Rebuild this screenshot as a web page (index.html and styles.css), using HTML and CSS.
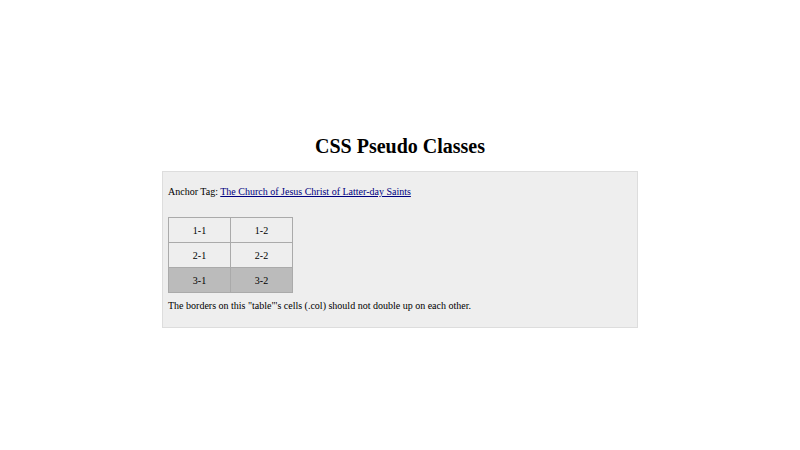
FILE: index.html
```html
<!DOCTYPE html>
<html>
<head>
<meta charset="utf-8">
<link rel="stylesheet" href="styles.css">
</head>
<body>
<h1 class="title">CSS Pseudo Classes</h1>
<div class="box">
  <p class="line">Anchor Tag: <a class="link" href="#">The Church of Jesus Christ of Latter-day Saints</a></p>
  <div class="table">
    <div class="row"><div class="col">1-1</div><div class="col">1-2</div></div>
    <div class="row"><div class="col">2-1</div><div class="col">2-2</div></div>
    <div class="row dark"><div class="col">3-1</div><div class="col">3-2</div></div>
  </div>
  <p class="line note">The borders on this "table"'s cells (.col) should not double up on each other.</p>
</div>
</body>
</html>
```
FILE: styles.css
```css
html, body {
  margin: 0;
  padding: 0;
  background: #fff;
}
body {
  font-family: "Liberation Serif", "Times New Roman", serif;
  font-size: 10px;
  color: #000;
  padding-top: 134px;
}
.title {
  font-size: 20px;
  font-weight: bold;
  text-align: center;
  margin: 0 0 13px 0;
  line-height: 24px;
}
.box {
  width: 464px;
  margin: 0 auto;
  padding: 0 5px;
  background: #eee;
  border: 1px solid #ddd;
}
.line {
  margin: 0;
  line-height: 12px;
}
.box > .line:first-child {
  padding-top: 14px;
}
.link {
  color: #000080;
  text-decoration: underline;
}
.table {
  margin-top: 19px;
  display: flex;
  flex-direction: column;
  width: 125px;
}
.row {
  display: flex;
}
.col {
  box-sizing: border-box;
  width: 63px;
  height: 26px;
  border: 1px solid #aaa;
  display: flex;
  align-items: center;
  justify-content: center;
  margin: -1px 0 0 -1px;
}
.row:first-child .col {
  margin-top: 0;
}
.col:first-child {
  margin-left: 0;
}
.dark .col {
  background: #bbb;
}
.note {
  margin-top: 7px;
  padding-bottom: 15px;
}
```
